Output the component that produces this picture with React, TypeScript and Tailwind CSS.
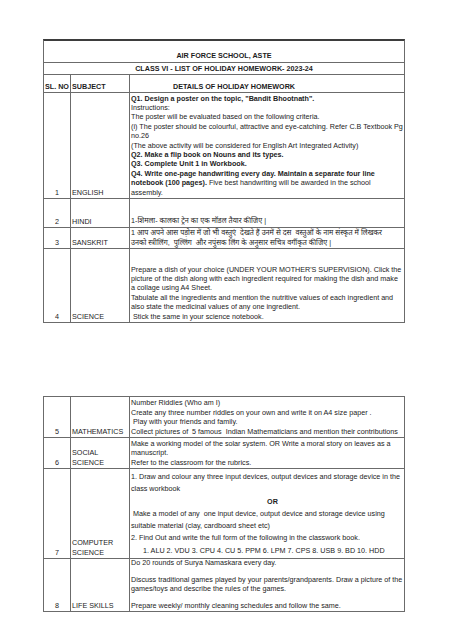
import type { ReactNode } from "react"

type Row = {
  no?: string
  subject: ReactNode
  height: string
  details: ReactNode
}

function Line({ children, className = "" }: { children: ReactNode; className?: string }) {
  return <div className={`whitespace-pre ${className}`}>{children}</div>
}

function TableRow({ no, subject, height, details }: Row) {
  return (
    <div className={`grid grid-cols-[27px_59px_1fr] border-b border-[#6b6b6b] ${height}`}>
      <div className="flex flex-col justify-end border-r border-[#6b6b6b] pb-[1px] text-center">{no}</div>
      <div className="flex flex-col justify-end border-r border-[#6b6b6b] pb-[1px] pl-[1px]">{subject}</div>
      <div className="flex flex-col justify-end overflow-hidden pb-[1px] pl-[1px]">{details}</div>
    </div>
  )
}

const firstPage: Row[] = [
  {
    no: "1",
    subject: "ENGLISH",
    height: "h-[106px]",
    details: (
      <>
        <Line className="font-bold">Q1. Design a poster on the topic, "Bandit Bhootnath".</Line>
        <Line>Instructions:</Line>
        <Line>The poster will be evaluated based on the following criteria.</Line>
        <Line>(i) The poster should be colourful, attractive and eye-catching. Refer C.B Textbook Pg</Line>
        <Line>no.26</Line>
        <Line>(The above activity will be considered for English Art Integrated Activity)</Line>
        <Line className="font-bold">Q2. Make a flip book on Nouns and its types.</Line>
        <Line className="font-bold">Q3. Complete Unit 1 in Workbook.</Line>
        <Line className="font-bold">Q4. Write one-page handwriting every day. Maintain a separate four line</Line>
        <Line>
          <span className="font-bold">notebook (100 pages).</span> Five best handwriting will be awarded in the school
        </Line>
        <Line>assembly.</Line>
      </>
    ),
  },
  {
    no: "2",
    subject: "HINDI",
    height: "h-[29px]",
    details: <Line className="pb-[1px]">1-शिमला- कालका ट्रेन का एक मॉडल तैयार कीजिए |</Line>,
  },
  {
    no: "3",
    subject: "SANSKRIT",
    height: "h-[21px]",
    details: (
      <>
        <Line>1 आप अपने आस पड़ोस में जो भी वस्तुएं  देखते हैं उनमें से दस  वस्तुओं के नाम संस्कृत में लिखकर</Line>
        <Line>उनको स्त्रीलिंग,  पुल्लिंग  और नपुंसक लिंग के अनुसार सचित्र वर्गीकृत कीजिए |</Line>
      </>
    ),
  },
  {
    no: "4",
    subject: "SCIENCE",
    height: "h-[74px]",
    details: (
      <>
        <Line>Prepare a dish of your choice (UNDER YOUR MOTHER'S SUPERVISION). Click the</Line>
        <Line>picture of the dish along with each ingredient required for making the dish and make</Line>
        <Line>a collage using A4 Sheet.</Line>
        <Line>Tabulate all the ingredients and mention the nutritive values of each ingredient and</Line>
        <Line>also state the medicinal values of any one ingredient.</Line>
        <Line> Stick the same in your science notebook.</Line>
      </>
    ),
  },
]

const secondPage: Row[] = [
  {
    no: "5",
    subject: "MATHEMATICS",
    height: "h-[41px]",
    details: (
      <>
        <Line>Number Riddles (Who am I)</Line>
        <Line>Create any three number riddles on your own and write it on A4 size paper .</Line>
        <Line> Play with your friends and family.</Line>
        <Line>Collect pictures of  5 famous  Indian Mathematicians and mention their contributions</Line>
      </>
    ),
  },
  {
    no: "6",
    subject: (
      <>
        <div>SOCIAL</div>
        <div>SCIENCE</div>
      </>
    ),
    height: "h-[31px]",
    details: (
      <>
        <Line>Make a working model of the solar system. OR Write a moral story on leaves as a</Line>
        <Line>manuscript.</Line>
        <Line>Refer to the classroom for the rubrics.</Line>
      </>
    ),
  },
  {
    no: "7",
    subject: (
      <>
        <div>COMPUTER</div>
        <div>SCIENCE</div>
      </>
    ),
    height: "h-[90px]",
    details: (
      <div className="leading-[12.3px]">
        <Line>1. Draw and colour any three input devices, output devices and storage device in the</Line>
        <Line>class workbook</Line>
        <Line className="pl-[10px] text-center font-bold">OR</Line>
        <Line> Make a model of any  one input device, output device and storage device using</Line>
        <Line>suitable material (clay, cardboard sheet etc)</Line>
        <Line>2. Find Out and write the full form of the following in the classwork book.</Line>
        <Line className="pl-[12px]">1. ALU 2. VDU 3. CPU 4. CU 5. PPM 6. LPM 7. CPS 8. USB 9. BD 10. HDD</Line>
      </div>
    ),
  },
  {
    no: "8",
    subject: "LIFE SKILLS",
    height: "h-[53px]",
    details: (
      <>
        <Line>Do 20 rounds of Surya Namaskara every day.</Line>
        <Line className="mt-[7px]">Discuss traditional games played by your parents/grandparents. Draw a picture of the</Line>
        <Line>games/toys and describe the rules of the games.</Line>
        <Line className="mt-[7px]">Prepare weekly/ monthly cleaning schedules and follow the same.</Line>
      </>
    ),
  },
]

export default function App() {
  return (
    <div className="min-h-[632px] w-[474px] bg-white pl-[43px] pt-[39px] font-['Liberation_Sans','Noto_Sans_Devanagari','Lohit_Devanagari','Noto_Sans',sans-serif] text-[7.2px] leading-[9.4px] text-[#1c1c1c]">
      {/* page 1 */}
      <div className="w-[362px] border-x border-t-2 border-x-[#6b6b6b] border-t-[#3d3d3d]">
        <div className="flex h-[22px] items-end justify-center border-b border-[#6b6b6b] pb-[2px] font-bold">
          AIR FORCE SCHOOL, ASTE
        </div>
        <div className="flex h-[12px] items-end justify-center border-b border-[#6b6b6b] pb-[1px] font-bold">
          CLASS VI - LIST OF HOLIDAY HOMEWORK- 2023-24
        </div>
        <div className="grid h-[18px] grid-cols-[27px_59px_1fr] border-b border-[#6b6b6b] font-bold">
          <div className="flex items-end whitespace-nowrap border-r border-[#6b6b6b] pb-[1px] pl-[1px]">SL. NO</div>
          <div className="flex items-end border-r border-[#6b6b6b] pb-[1px] pl-[1px]">SUBJECT</div>
          <div className="flex items-end pb-[1px] pl-[43px]">DETAILS OF HOLIDAY HOMEWORK</div>
        </div>
        {firstPage.map((row) => (
          <TableRow key={row.no} {...row} />
        ))}
      </div>

      {/* page 2 */}
      <div className="mt-[73px] w-[362px] border-x border-t border-[#6b6b6b]">
        {secondPage.map((row) => (
          <TableRow key={row.no} {...row} />
        ))}
      </div>
    </div>
  )
}
